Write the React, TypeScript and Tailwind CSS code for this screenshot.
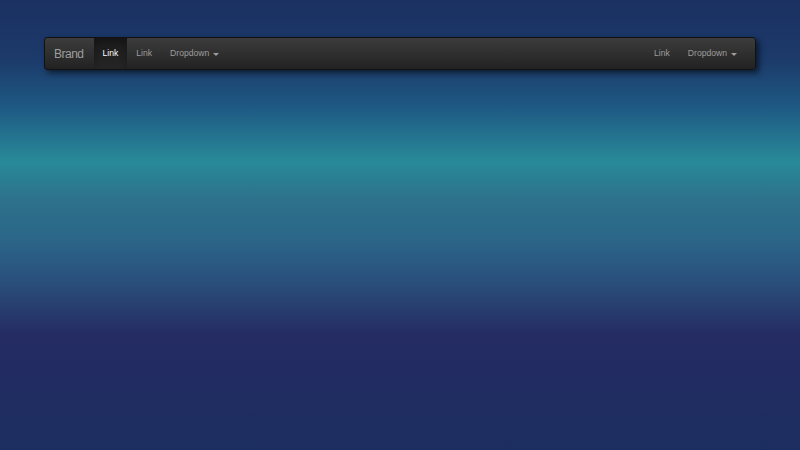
export default function App() {
  return (
    <div className="h-[450px] w-[800px] overflow-hidden bg-[linear-gradient(to_bottom,#1b3162_0%,#1c3a6a_13%,#1e5a84_24%,#288a98_36%,#2d728c_44%,#2c6889_52%,#2a5680_60%,#283f70_68%,#252c64_74%,#1c2e5f_100%)] pt-[37px] font-['Liberation_Sans',Arial,sans-serif]">
      <nav className="mx-[44px] flex h-[33px] items-stretch rounded-[3px] border border-[#111] bg-[linear-gradient(to_bottom,#3c3c3c,#222)] shadow-[3px_3px_6px_rgba(0,0,0,0.6)]">
        <a className="flex items-center pl-[9px] pr-[10px] text-[12px] tracking-[-0.5px] text-[#9d9d9d]">Brand</a>
        <ul className="flex items-stretch">
          <li className="flex items-center bg-[linear-gradient(to_bottom,#1a1a1a,#262626)] px-[9px] text-[8.6px] text-white shadow-[inset_0_3px_8px_rgba(0,0,0,0.25)]">
            Link
          </li>
          <li className="flex items-center px-[9px] text-[8.6px] text-[#9d9d9d]">Link</li>
          <li className="flex items-center gap-[4px] px-[9px] text-[8.6px] text-[#9d9d9d]">
            Dropdown
            <span className="mt-[1px] h-0 w-0 border-x-[3px] border-t-[3px] border-x-transparent border-t-[#9d9d9d]" />
          </li>
        </ul>
        <ul className="ml-auto mr-[9px] flex items-stretch">
          <li className="flex items-center px-[9px] text-[8.6px] text-[#9d9d9d]">Link</li>
          <li className="flex items-center gap-[4px] px-[9px] text-[8.6px] text-[#9d9d9d]">
            Dropdown
            <span className="mt-[1px] h-0 w-0 border-x-[3px] border-t-[3px] border-x-transparent border-t-[#9d9d9d]" />
          </li>
        </ul>
      </nav>
    </div>
  );
}
